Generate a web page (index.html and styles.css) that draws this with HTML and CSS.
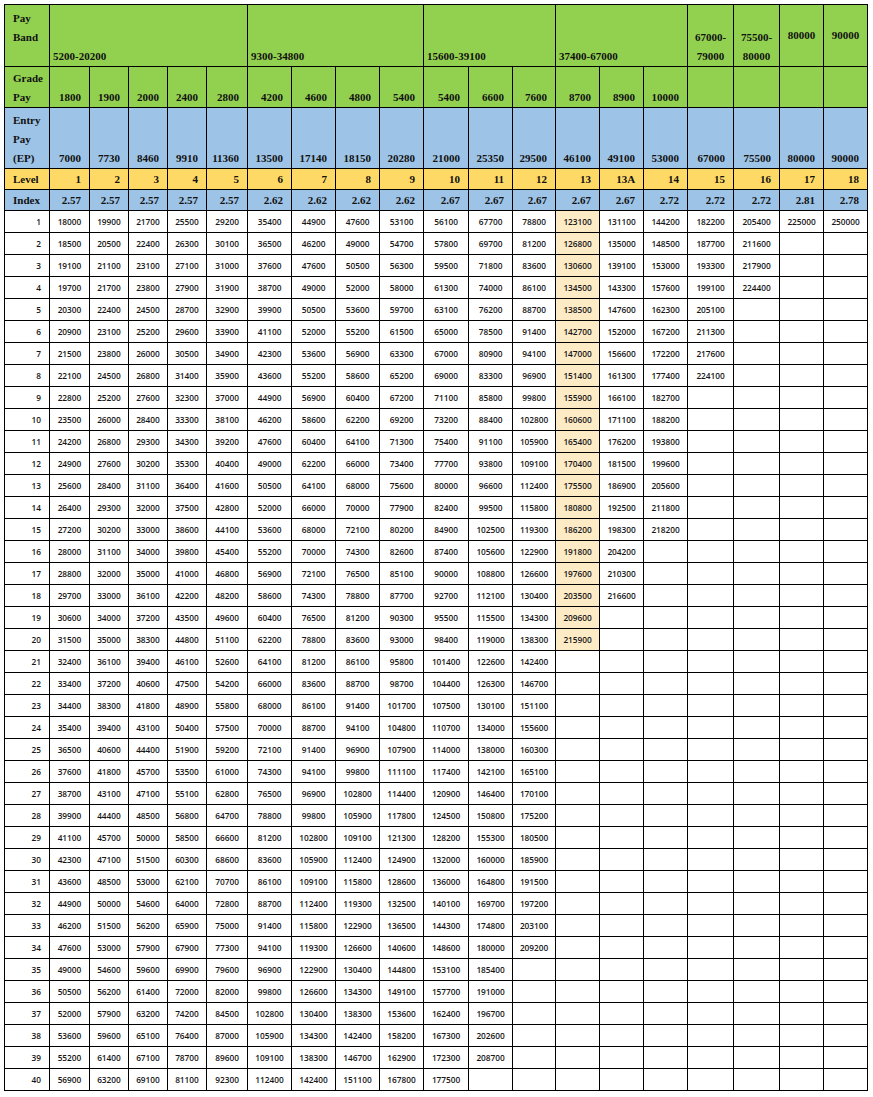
FILE: index.html
```html
<!DOCTYPE html>
<html>
<head>
<meta charset="utf-8">
<title>Pay Matrix</title>
<link rel="stylesheet" href="styles.css">
</head>
<body>
<table class="matrix">
<colgroup>
<col class="w45"><col class="w40"><col class="w39"><col class="w39"><col class="w39"><col class="w41"><col class="w44"><col class="w44"><col class="w44"><col class="w44"><col class="w45"><col class="w44"><col class="w43"><col class="w44"><col class="w44"><col class="w44"><col class="w46"><col class="w46"><col class="w44"><col class="w44">
</colgroup>
<thead>
<tr class="r-band">
<td class="lbl top">Pay<br>Band</td>
<td class="band" colspan="5">5200-20200</td>
<td class="band" colspan="4">9300-34800</td>
<td class="band" colspan="3">15600-39100</td>
<td class="band" colspan="3">37400-67000</td>
<td class="ctr">67000-<br>79000</td>
<td class="ctr">75500-<br>80000</td>
<td class="ctr mid">80000</td>
<td class="ctr mid">90000</td>
</tr>
<tr class="r-grade">
<td class="lbl">Grade<br>Pay</td>
<td>1800</td><td>1900</td><td>2000</td><td>2400</td><td>2800</td><td>4200</td><td>4600</td><td>4800</td><td>5400</td><td>5400</td><td>6600</td><td>7600</td><td>8700</td><td>8900</td><td>10000</td><td></td><td></td><td></td><td></td>
</tr>
<tr class="r-entry">
<td class="lbl">Entry<br>Pay<br>(EP)</td>
<td>7000</td><td>7730</td><td>8460</td><td>9910</td><td>11360</td><td>13500</td><td>17140</td><td>18150</td><td>20280</td><td>21000</td><td>25350</td><td>29500</td><td>46100</td><td>49100</td><td>53000</td><td>67000</td><td>75500</td><td>80000</td><td>90000</td>
</tr>
<tr class="r-level">
<td class="lbl">Level</td>
<td>1</td><td>2</td><td>3</td><td>4</td><td>5</td><td>6</td><td>7</td><td>8</td><td>9</td><td>10</td><td>11</td><td>12</td><td>13</td><td>13A</td><td>14</td><td>15</td><td>16</td><td>17</td><td>18</td>
</tr>
<tr class="r-index">
<td class="lbl">Index</td>
<td>2.57</td><td>2.57</td><td>2.57</td><td>2.57</td><td>2.57</td><td>2.62</td><td>2.62</td><td>2.62</td><td>2.62</td><td>2.67</td><td>2.67</td><td>2.67</td><td>2.67</td><td>2.67</td><td>2.72</td><td>2.72</td><td>2.72</td><td>2.81</td><td>2.78</td>
</tr>
</thead>
<tbody>
<tr><td>1</td><td>18000</td><td>19900</td><td>21700</td><td>25500</td><td>29200</td><td>35400</td><td>44900</td><td>47600</td><td>53100</td><td>56100</td><td>67700</td><td>78800</td><td class="hl">123100</td><td>131100</td><td>144200</td><td>182200</td><td>205400</td><td>225000</td><td>250000</td></tr>
<tr><td>2</td><td>18500</td><td>20500</td><td>22400</td><td>26300</td><td>30100</td><td>36500</td><td>46200</td><td>49000</td><td>54700</td><td>57800</td><td>69700</td><td>81200</td><td class="hl">126800</td><td>135000</td><td>148500</td><td>187700</td><td>211600</td><td></td><td></td></tr>
<tr><td>3</td><td>19100</td><td>21100</td><td>23100</td><td>27100</td><td>31000</td><td>37600</td><td>47600</td><td>50500</td><td>56300</td><td>59500</td><td>71800</td><td>83600</td><td class="hl">130600</td><td>139100</td><td>153000</td><td>193300</td><td>217900</td><td></td><td></td></tr>
<tr><td>4</td><td>19700</td><td>21700</td><td>23800</td><td>27900</td><td>31900</td><td>38700</td><td>49000</td><td>52000</td><td>58000</td><td>61300</td><td>74000</td><td>86100</td><td class="hl">134500</td><td>143300</td><td>157600</td><td>199100</td><td>224400</td><td></td><td></td></tr>
<tr><td>5</td><td>20300</td><td>22400</td><td>24500</td><td>28700</td><td>32900</td><td>39900</td><td>50500</td><td>53600</td><td>59700</td><td>63100</td><td>76200</td><td>88700</td><td class="hl">138500</td><td>147600</td><td>162300</td><td>205100</td><td></td><td></td><td></td></tr>
<tr><td>6</td><td>20900</td><td>23100</td><td>25200</td><td>29600</td><td>33900</td><td>41100</td><td>52000</td><td>55200</td><td>61500</td><td>65000</td><td>78500</td><td>91400</td><td class="hl">142700</td><td>152000</td><td>167200</td><td>211300</td><td></td><td></td><td></td></tr>
<tr><td>7</td><td>21500</td><td>23800</td><td>26000</td><td>30500</td><td>34900</td><td>42300</td><td>53600</td><td>56900</td><td>63300</td><td>67000</td><td>80900</td><td>94100</td><td class="hl">147000</td><td>156600</td><td>172200</td><td>217600</td><td></td><td></td><td></td></tr>
<tr><td>8</td><td>22100</td><td>24500</td><td>26800</td><td>31400</td><td>35900</td><td>43600</td><td>55200</td><td>58600</td><td>65200</td><td>69000</td><td>83300</td><td>96900</td><td class="hl">151400</td><td>161300</td><td>177400</td><td>224100</td><td></td><td></td><td></td></tr>
<tr><td>9</td><td>22800</td><td>25200</td><td>27600</td><td>32300</td><td>37000</td><td>44900</td><td>56900</td><td>60400</td><td>67200</td><td>71100</td><td>85800</td><td>99800</td><td class="hl">155900</td><td>166100</td><td>182700</td><td></td><td></td><td></td><td></td></tr>
<tr><td>10</td><td>23500</td><td>26000</td><td>28400</td><td>33300</td><td>38100</td><td>46200</td><td>58600</td><td>62200</td><td>69200</td><td>73200</td><td>88400</td><td>102800</td><td class="hl">160600</td><td>171100</td><td>188200</td><td></td><td></td><td></td><td></td></tr>
<tr><td>11</td><td>24200</td><td>26800</td><td>29300</td><td>34300</td><td>39200</td><td>47600</td><td>60400</td><td>64100</td><td>71300</td><td>75400</td><td>91100</td><td>105900</td><td class="hl">165400</td><td>176200</td><td>193800</td><td></td><td></td><td></td><td></td></tr>
<tr><td>12</td><td>24900</td><td>27600</td><td>30200</td><td>35300</td><td>40400</td><td>49000</td><td>62200</td><td>66000</td><td>73400</td><td>77700</td><td>93800</td><td>109100</td><td class="hl">170400</td><td>181500</td><td>199600</td><td></td><td></td><td></td><td></td></tr>
<tr><td>13</td><td>25600</td><td>28400</td><td>31100</td><td>36400</td><td>41600</td><td>50500</td><td>64100</td><td>68000</td><td>75600</td><td>80000</td><td>96600</td><td>112400</td><td class="hl">175500</td><td>186900</td><td>205600</td><td></td><td></td><td></td><td></td></tr>
<tr><td>14</td><td>26400</td><td>29300</td><td>32000</td><td>37500</td><td>42800</td><td>52000</td><td>66000</td><td>70000</td><td>77900</td><td>82400</td><td>99500</td><td>115800</td><td class="hl">180800</td><td>192500</td><td>211800</td><td></td><td></td><td></td><td></td></tr>
<tr><td>15</td><td>27200</td><td>30200</td><td>33000</td><td>38600</td><td>44100</td><td>53600</td><td>68000</td><td>72100</td><td>80200</td><td>84900</td><td>102500</td><td>119300</td><td class="hl">186200</td><td>198300</td><td>218200</td><td></td><td></td><td></td><td></td></tr>
<tr><td>16</td><td>28000</td><td>31100</td><td>34000</td><td>39800</td><td>45400</td><td>55200</td><td>70000</td><td>74300</td><td>82600</td><td>87400</td><td>105600</td><td>122900</td><td class="hl">191800</td><td>204200</td><td></td><td></td><td></td><td></td><td></td></tr>
<tr><td>17</td><td>28800</td><td>32000</td><td>35000</td><td>41000</td><td>46800</td><td>56900</td><td>72100</td><td>76500</td><td>85100</td><td>90000</td><td>108800</td><td>126600</td><td class="hl">197600</td><td>210300</td><td></td><td></td><td></td><td></td><td></td></tr>
<tr><td>18</td><td>29700</td><td>33000</td><td>36100</td><td>42200</td><td>48200</td><td>58600</td><td>74300</td><td>78800</td><td>87700</td><td>92700</td><td>112100</td><td>130400</td><td class="hl">203500</td><td>216600</td><td></td><td></td><td></td><td></td><td></td></tr>
<tr><td>19</td><td>30600</td><td>34000</td><td>37200</td><td>43500</td><td>49600</td><td>60400</td><td>76500</td><td>81200</td><td>90300</td><td>95500</td><td>115500</td><td>134300</td><td class="hl">209600</td><td></td><td></td><td></td><td></td><td></td><td></td></tr>
<tr><td>20</td><td>31500</td><td>35000</td><td>38300</td><td>44800</td><td>51100</td><td>62200</td><td>78800</td><td>83600</td><td>93000</td><td>98400</td><td>119000</td><td>138300</td><td class="hl">215900</td><td></td><td></td><td></td><td></td><td></td><td></td></tr>
<tr><td>21</td><td>32400</td><td>36100</td><td>39400</td><td>46100</td><td>52600</td><td>64100</td><td>81200</td><td>86100</td><td>95800</td><td>101400</td><td>122600</td><td>142400</td><td></td><td></td><td></td><td></td><td></td><td></td><td></td></tr>
<tr><td>22</td><td>33400</td><td>37200</td><td>40600</td><td>47500</td><td>54200</td><td>66000</td><td>83600</td><td>88700</td><td>98700</td><td>104400</td><td>126300</td><td>146700</td><td></td><td></td><td></td><td></td><td></td><td></td><td></td></tr>
<tr><td>23</td><td>34400</td><td>38300</td><td>41800</td><td>48900</td><td>55800</td><td>68000</td><td>86100</td><td>91400</td><td>101700</td><td>107500</td><td>130100</td><td>151100</td><td></td><td></td><td></td><td></td><td></td><td></td><td></td></tr>
<tr><td>24</td><td>35400</td><td>39400</td><td>43100</td><td>50400</td><td>57500</td><td>70000</td><td>88700</td><td>94100</td><td>104800</td><td>110700</td><td>134000</td><td>155600</td><td></td><td></td><td></td><td></td><td></td><td></td><td></td></tr>
<tr><td>25</td><td>36500</td><td>40600</td><td>44400</td><td>51900</td><td>59200</td><td>72100</td><td>91400</td><td>96900</td><td>107900</td><td>114000</td><td>138000</td><td>160300</td><td></td><td></td><td></td><td></td><td></td><td></td><td></td></tr>
<tr><td>26</td><td>37600</td><td>41800</td><td>45700</td><td>53500</td><td>61000</td><td>74300</td><td>94100</td><td>99800</td><td>111100</td><td>117400</td><td>142100</td><td>165100</td><td></td><td></td><td></td><td></td><td></td><td></td><td></td></tr>
<tr><td>27</td><td>38700</td><td>43100</td><td>47100</td><td>55100</td><td>62800</td><td>76500</td><td>96900</td><td>102800</td><td>114400</td><td>120900</td><td>146400</td><td>170100</td><td></td><td></td><td></td><td></td><td></td><td></td><td></td></tr>
<tr><td>28</td><td>39900</td><td>44400</td><td>48500</td><td>56800</td><td>64700</td><td>78800</td><td>99800</td><td>105900</td><td>117800</td><td>124500</td><td>150800</td><td>175200</td><td></td><td></td><td></td><td></td><td></td><td></td><td></td></tr>
<tr><td>29</td><td>41100</td><td>45700</td><td>50000</td><td>58500</td><td>66600</td><td>81200</td><td>102800</td><td>109100</td><td>121300</td><td>128200</td><td>155300</td><td>180500</td><td></td><td></td><td></td><td></td><td></td><td></td><td></td></tr>
<tr><td>30</td><td>42300</td><td>47100</td><td>51500</td><td>60300</td><td>68600</td><td>83600</td><td>105900</td><td>112400</td><td>124900</td><td>132000</td><td>160000</td><td>185900</td><td></td><td></td><td></td><td></td><td></td><td></td><td></td></tr>
<tr><td>31</td><td>43600</td><td>48500</td><td>53000</td><td>62100</td><td>70700</td><td>86100</td><td>109100</td><td>115800</td><td>128600</td><td>136000</td><td>164800</td><td>191500</td><td></td><td></td><td></td><td></td><td></td><td></td><td></td></tr>
<tr><td>32</td><td>44900</td><td>50000</td><td>54600</td><td>64000</td><td>72800</td><td>88700</td><td>112400</td><td>119300</td><td>132500</td><td>140100</td><td>169700</td><td>197200</td><td></td><td></td><td></td><td></td><td></td><td></td><td></td></tr>
<tr><td>33</td><td>46200</td><td>51500</td><td>56200</td><td>65900</td><td>75000</td><td>91400</td><td>115800</td><td>122900</td><td>136500</td><td>144300</td><td>174800</td><td>203100</td><td></td><td></td><td></td><td></td><td></td><td></td><td></td></tr>
<tr><td>34</td><td>47600</td><td>53000</td><td>57900</td><td>67900</td><td>77300</td><td>94100</td><td>119300</td><td>126600</td><td>140600</td><td>148600</td><td>180000</td><td>209200</td><td></td><td></td><td></td><td></td><td></td><td></td><td></td></tr>
<tr><td>35</td><td>49000</td><td>54600</td><td>59600</td><td>69900</td><td>79600</td><td>96900</td><td>122900</td><td>130400</td><td>144800</td><td>153100</td><td>185400</td><td></td><td></td><td></td><td></td><td></td><td></td><td></td><td></td></tr>
<tr><td>36</td><td>50500</td><td>56200</td><td>61400</td><td>72000</td><td>82000</td><td>99800</td><td>126600</td><td>134300</td><td>149100</td><td>157700</td><td>191000</td><td></td><td></td><td></td><td></td><td></td><td></td><td></td><td></td></tr>
<tr><td>37</td><td>52000</td><td>57900</td><td>63200</td><td>74200</td><td>84500</td><td>102800</td><td>130400</td><td>138300</td><td>153600</td><td>162400</td><td>196700</td><td></td><td></td><td></td><td></td><td></td><td></td><td></td><td></td></tr>
<tr><td>38</td><td>53600</td><td>59600</td><td>65100</td><td>76400</td><td>87000</td><td>105900</td><td>134300</td><td>142400</td><td>158200</td><td>167300</td><td>202600</td><td></td><td></td><td></td><td></td><td></td><td></td><td></td><td></td></tr>
<tr><td>39</td><td>55200</td><td>61400</td><td>67100</td><td>78700</td><td>89600</td><td>109100</td><td>138300</td><td>146700</td><td>162900</td><td>172300</td><td>208700</td><td></td><td></td><td></td><td></td><td></td><td></td><td></td><td></td></tr>
<tr><td>40</td><td>56900</td><td>63200</td><td>69100</td><td>81100</td><td>92300</td><td>112400</td><td>142400</td><td>151100</td><td>167800</td><td>177500</td><td></td><td></td><td></td><td></td><td></td><td></td><td></td><td></td><td></td></tr>
</tbody>
</table>
</body>
</html>
```
FILE: styles.css
```css
html, body {
  margin: 0;
  padding: 0;
  background: #ffffff;
}
body {
  padding: 4px 0 0 4px;
}
.matrix {
  border-collapse: collapse;
  table-layout: fixed;
  width: 864px;
  color: #000;
}
.w39 { width: 39px; }
.w40 { width: 40px; }
.w41 { width: 41px; }
.w43 { width: 43px; }
.w44 { width: 44px; }
.w45 { width: 45px; }
.w46 { width: 46px; }

.matrix td {
  border: 1px solid #000;
  padding: 0 8px 0 0;
  white-space: nowrap;
  overflow: hidden;
}

/* header rows: content heights, no vertical padding */
.matrix thead td {
  font-family: "Liberation Serif", "Times New Roman", serif;
  font-weight: bold;
  font-size: 11px;
  line-height: 19px;
  text-align: right;
  vertical-align: bottom;
  color: #111;
}
.matrix thead td.lbl {
  text-align: left;
  padding: 0 0 0 8px;
}
.matrix thead td.band {
  text-align: left;
  padding: 0 0 0 3px;
}
.matrix thead td.ctr {
  text-align: center;
  padding: 0;
}
.matrix thead td.mid {
  vertical-align: middle;
}
.r-band td, .r-grade td { background: #92d050; }
.r-entry td, .r-index td { background: #9dc3e6; }
.r-level td { background: #ffd966; }
.r-band td { height: 61px; }
.matrix thead .r-band td.top {
  vertical-align: top;
  height: 57px;
  padding-top: 4px;
}
.r-grade td { height: 40px; }
.r-entry td { height: 60px; }
.matrix thead .r-level td,
.matrix thead .r-index td {
  height: 20px;
  line-height: 20px;
  vertical-align: middle;
}

/* data rows */
.matrix tbody td {
  height: 21px;
  font-family: "Open Sans", "Liberation Sans", Arial, sans-serif;
  font-weight: 600;
  font-size: 8.3px;
  text-align: center;
  vertical-align: middle;
  padding: 0;
  color: #161616;
}
.matrix tbody td:first-child {
  text-align: right;
  padding-right: 8px;
}
.matrix tbody td.hl {
  background: #fdebc6;
}
```
